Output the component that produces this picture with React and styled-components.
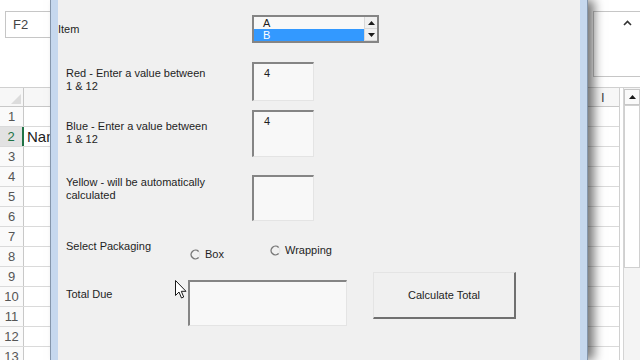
import React from 'react'
import styled, { createGlobalStyle } from 'styled-components'

const GlobalStyle = createGlobalStyle`
  html, body {
    margin: 0;
    padding: 0;
    overflow: hidden;
    background: #ffffff;
  }
`

const ROWS = ['1', '2', '3', '4', '5', '6', '7', '8', '9', '10', '11', '12', '13']

function RadioMark() {
  return (
    <svg width="11" height="11" viewBox="0 0 10 10">
      <circle cx="5" cy="5" r="4" fill="none" stroke="#e2e2e2" strokeWidth="1" />
      <path d="M7.83 2.17 A4 4 0 1 0 7.83 7.83" fill="none" stroke="#767676" strokeWidth="1.3" />
    </svg>
  )
}

function Pointer() {
  return (
    <svg width="12" height="19" viewBox="0 0 12 19">
      <path d="M0.5 0.5 L0.5 15.5 L4 12 L6.5 18 L8.7 17 L6.3 11.3 L11 11.3 Z" fill="#ffffff" stroke="#1a1a1a" strokeWidth="1" strokeLinejoin="round" />
    </svg>
  )
}

function Arrow({ up }) {
  return (
    <svg width="7" height="4" viewBox="0 0 7 4">
      {up ? <path d="M0 4 L3.5 0 L7 4 Z" fill="#1a1a1a" /> : <path d="M0 0 L3.5 4 L7 0 Z" fill="#1a1a1a" />}
    </svg>
  )
}

function App() {
  return (
    <>
      <GlobalStyle />
      <Screen>
        <ExcelLeft>
          <NameArea>
            <NameBox>F2</NameBox>
          </NameArea>
          <HeaderRow>
            <Corner>
              <svg width="10" height="10" viewBox="0 0 10 10">
                <path d="M10 0 L10 10 L0 10 Z" fill="#dcdcdc" />
              </svg>
            </Corner>
            <div />
          </HeaderRow>
          {ROWS.map((n) => (
            <SheetRow key={n}>
              <RowNum $active={n === '2'}>{n}</RowNum>
              <Cell>{n === '2' ? 'Nam' : ''}</Cell>
            </SheetRow>
          ))}
        </ExcelLeft>

        <Window>
          <FormBody>
            <Row>
              <Label $width={194} $shift={-8} $center>Item</Label>
              <ListBox>
                <ListItems>
                  <ListItem>A</ListItem>
                  <ListItem $selected>B</ListItem>
                </ListItems>
                <ListScroll>
                  <ScrollBtn><Arrow up /></ScrollBtn>
                  <ScrollBtn><Arrow /></ScrollBtn>
                </ListScroll>
              </ListBox>
            </Row>

            <Row $top={19}>
              <Label $width={186} $pad={5}>Red - Enter a value between<br />1 &amp; 12</Label>
              <TextBox $w={62} $h={39}>4</TextBox>
            </Row>

            <Row $top={9}>
              <Label $width={186} $pad={10}>Blue - Enter a value between<br />1 &amp; 12</Label>
              <TextBox $w={62} $h={47}>4</TextBox>
            </Row>

            <Row $top={18}>
              <Label $width={186} $pad={1}>Yellow - will be automatically<br />calculated</Label>
              <TextBox $w={62} $h={46} />
            </Row>

            <Row $top={19} $height={32}>
              <Label $width={124}>Select Packaging</Label>
              <Radio $top={8} $width={80}>
                <RadioMark />
                <span>Box</span>
              </Radio>
              <Radio $top={4}>
                <RadioMark />
                <span>Wrapping</span>
              </Radio>
            </Row>

            <Row>
              <Label $width={122} $pad={16}>Total Due</Label>
              <TextBox $w={159} $h={46} $top={8} />
              <Button>Calculate Total</Button>
            </Row>

            <Cursor>
              <Pointer />
            </Cursor>
          </FormBody>
        </Window>

        <ExcelRight>
          <FormulaZone>
            <FormulaBox>
              <svg width="9" height="6" viewBox="0 0 9 6">
                <polyline points="1,5 4.5,1.5 8,5" fill="none" stroke="#333" strokeWidth="1.6" />
              </svg>
            </FormulaBox>
          </FormulaZone>
          <SheetZone>
            <Cells>
              <ColHeader>I</ColHeader>
              {ROWS.map((n) => (
                <RightCell key={n} />
              ))}
            </Cells>
            <VScroll>
              <VScrollBtn><Arrow up /></VScrollBtn>
              <Thumb />
            </VScroll>
          </SheetZone>
        </ExcelRight>
      </Screen>
    </>
  )
}

export default App

const Screen = styled.div`
  width: 640px;
  height: 360px;
  display: flex;
  overflow: hidden;
  font-family: "Liberation Sans", Arial, sans-serif;
`

const ExcelLeft = styled.div`
  width: 51px;
  flex: none;
  background: #ffffff;
  display: flex;
  flex-direction: column;
  overflow: hidden;
`
const NameArea = styled.div`
  height: 88px;
  flex: none;
  box-sizing: border-box;
  padding: 11px 0 0 5px;
  background: #ffffff;
  border-bottom: 1px solid #d0d0d0;
`
const NameBox = styled.div`
  width: 46px;
  height: 27px;
  box-sizing: border-box;
  border: 1px solid #c6c6c6;
  padding-left: 7px;
  display: flex;
  align-items: center;
  font-size: 13px;
  color: #444;
`
const HeaderRow = styled.div`
  height: 19px;
  flex: none;
  box-sizing: border-box;
  display: grid;
  grid-template-columns: 24px 1fr;
  border-bottom: 1px solid #c8c8c8;
  background: #f7f7f7;
`
const Corner = styled.div`
  border-right: 1px solid #c8c8c8;
  display: flex;
  align-items: flex-end;
  justify-content: flex-end;
  padding: 0 2px 2px 0;
`
const SheetRow = styled.div`
  height: 20px;
  flex: none;
  box-sizing: border-box;
  display: grid;
  grid-template-columns: 24px 1fr;
  border-bottom: 1px solid #dadada;
`
const RowNum = styled.div`
  box-sizing: border-box;
  border-right: ${(p) => (p.$active ? '2px solid #217346' : '1px solid #c8c8c8')};
  background: ${(p) => (p.$active ? '#e2e2e2' : '#fafafa')};
  color: ${(p) => (p.$active ? '#217346' : '#555')};
  font-size: 13px;
  display: flex;
  align-items: center;
  justify-content: center;
`
const Cell = styled.div`
  font-size: 15px;
  color: #222;
  padding-left: 3px;
  display: flex;
  align-items: center;
  white-space: nowrap;
  overflow: hidden;
`

const Window = styled.div`
  width: 522px;
  flex: none;
  border-left: 7px solid #c6d8ee;
  border-right: 7px solid #c6d8ee;
  box-shadow: -1px 0 0 #8596ab, 1px 0 0 #8596ab, 7px 0 10px rgba(0, 0, 0, 0.55);
  position: relative;
  z-index: 1;
  background: #f0f0f0;
`
const FormBody = styled.div`
  position: relative;
  height: 100%;
  box-sizing: border-box;
  padding: 15px 0 0 8px;
  font-size: 11px;
  color: #1e1e1e;
`
const Row = styled.div`
  display: flex;
  align-items: flex-start;
  margin-top: ${(p) => p.$top || 0}px;
  height: ${(p) => (p.$height ? `${p.$height}px` : 'auto')};
`
const Label = styled.div`
  width: ${(p) => p.$width}px;
  margin-left: ${(p) => p.$shift || 0}px;
  padding-top: ${(p) => p.$pad || 0}px;
  align-self: ${(p) => (p.$center ? 'center' : 'flex-start')};
  flex: none;
  line-height: 13px;
  white-space: nowrap;
`
const ListBox = styled.div`
  width: 127px;
  height: 28px;
  box-sizing: border-box;
  border: 2px solid #858585;
  background: #f8f8f8;
  display: flex;
`
const ListItems = styled.div`
  flex: 1;
  display: flex;
  flex-direction: column;
`
const ListItem = styled.div`
  height: 12px;
  line-height: 12px;
  padding-left: 9px;
  background: ${(p) => (p.$selected ? '#3399ff' : 'transparent')};
  color: ${(p) => (p.$selected ? '#ffffff' : '#1e1e1e')};
`
const ListScroll = styled.div`
  width: 12px;
  display: flex;
  flex-direction: column;
  border-left: 1px solid #d8d8d8;
`
const ScrollBtn = styled.div`
  flex: 1;
  display: flex;
  align-items: center;
  justify-content: center;
  background: #f0f0f0;
  border-bottom: 1px solid #d8d8d8;
`
const TextBox = styled.div`
  width: ${(p) => p.$w}px;
  height: ${(p) => p.$h}px;
  margin-top: ${(p) => p.$top || 0}px;
  flex: none;
  box-sizing: border-box;
  border-top: 2px solid #858585;
  border-left: 2px solid #858585;
  border-right: 1px solid #e4e4e4;
  border-bottom: 1px solid #e4e4e4;
  background: #f8f8f8;
  padding: 3px 0 0 10px;
  font-size: 11px;
  line-height: 13px;
`
const Radio = styled.div`
  display: flex;
  align-items: center;
  gap: 4px;
  margin-top: ${(p) => p.$top}px;
  width: ${(p) => (p.$width ? `${p.$width}px` : 'auto')};
  flex: none;
`
const Button = styled.div`
  width: 143px;
  height: 47px;
  margin-left: 26px;
  margin-top: 0;
  flex: none;
  box-sizing: border-box;
  border-top: 1px solid #e4e4e4;
  border-left: 1px solid #e4e4e4;
  border-right: 2px solid #707070;
  border-bottom: 2px solid #707070;
  background: #f0f0f0;
  display: flex;
  align-items: center;
  justify-content: center;
  font-size: 11px;
`
const Cursor = styled.div`
  position: absolute;
  left: 117px;
  top: 280px;
  line-height: 0;
`

const ExcelRight = styled.div`
  flex: 1;
  background: #ffffff;
  display: flex;
  flex-direction: column;
  overflow: hidden;
`
const FormulaZone = styled.div`
  height: 88px;
  flex: none;
  box-sizing: border-box;
  padding-top: 11px;
  border-bottom: 1px solid #d0d0d0;
`
const FormulaBox = styled.div`
  height: 66px;
  margin-left: 6px;
  margin-right: -4px;
  box-sizing: border-box;
  border: 1px solid #c6c6c6;
  border-right: none;
  display: flex;
  justify-content: flex-end;
  padding: 8px 12px 0 0;
  align-items: flex-start;
`
const SheetZone = styled.div`
  flex: 1;
  display: flex;
  gap: 3px;
`
const Cells = styled.div`
  flex: 1;
  display: flex;
  flex-direction: column;
  border-right: 1px solid #d0d0d0;
`
const ColHeader = styled.div`
  height: 19px;
  flex: none;
  box-sizing: border-box;
  border-bottom: 1px solid #c8c8c8;
  background: #f7f7f7;
  font-size: 13px;
  color: #444;
  display: flex;
  align-items: center;
  padding-left: 14px;
`
const RightCell = styled.div`
  height: 20px;
  flex: none;
  box-sizing: border-box;
  border-bottom: 1px solid #dadada;
`
const VScroll = styled.div`
  width: 16px;
  flex: none;
  display: flex;
  flex-direction: column;
  background: #f4f4f4;
  border-left: 1px solid #d4d4d4;
`
const VScrollBtn = styled.div`
  height: 16px;
  margin-top: 1px;
  box-sizing: border-box;
  border: 1px solid #c8c8c8;
  background: #fafafa;
  display: flex;
  align-items: center;
  justify-content: center;
`
const Thumb = styled.div`
  height: 163px;
  box-sizing: border-box;
  border: 1px solid #d0d0d0;
  background: #ffffff;
`
